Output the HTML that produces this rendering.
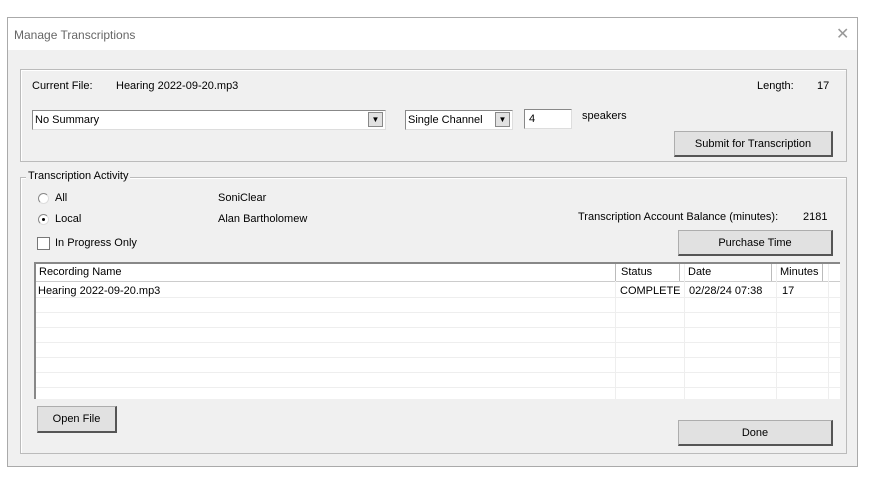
<!DOCTYPE html>
<html><head><style>
body{margin:0;width:870px;height:483px;background:#fff;position:relative;font-family:"Liberation Sans",sans-serif;font-size:11px;color:#000;overflow:hidden}
.a{position:absolute;white-space:nowrap}
.win{left:7px;top:17px;width:851px;height:450px;border:1px solid #aaa;background:#f0f0f0;box-sizing:border-box}
.title{left:8px;top:18px;width:849px;height:32px;background:#fff}
.grp{border:1px solid #bbb;box-shadow:inset 1px 1px 0 #fff}
.btn{background:#e1e1e1;border:1px solid #adadad;border-right:2px solid #555;border-bottom:2px solid #555;box-sizing:border-box;text-align:center}
.inp{background:#fff;border:1px solid #888;border-right-color:#ddd;border-bottom-color:#ddd;box-sizing:border-box}
.dd{width:15px;height:15px;background:#e1e1e1;border:1px solid #888;box-sizing:border-box;font-size:8px;text-align:center;line-height:14px}
.row{left:36px;width:804px;height:1px;background:#eee}
.col{width:1px;background:#eee}
.rad{width:9px;height:9px;border-radius:50%;border:1px solid #888;border-right-color:#ddd;border-bottom-color:#ddd;background:#fff}
</style></head><body>
<div class="a win"></div>
<div class="a title"></div>
<div class="a" style="left:14px;top:28px;font-size:12px;color:#666">Manage Transcriptions</div>
<div class="a" style="left:836px;top:24px;font-size:16px;color:#999">✕</div>

<div class="a grp" style="left:20px;top:69px;width:825px;height:91px"></div>
<div class="a" style="left:32px;top:80px">Current File:</div>
<div class="a" style="left:116px;top:80px">Hearing 2022-09-20.mp3</div>
<div class="a" style="left:757px;top:80px">Length:</div>
<div class="a" style="left:817px;top:80px">17</div>
<div class="a inp" style="left:32px;top:110px;width:354px;height:20px;padding:3px 2px">No Summary</div>
<div class="a dd" style="left:368px;top:112px">▼</div>
<div class="a inp" style="left:405px;top:110px;width:108px;height:20px;padding:3px 2px">Single Channel</div>
<div class="a dd" style="left:495px;top:112px">▼</div>
<div class="a inp" style="left:524px;top:109px;width:48px;height:20px;padding:3px 4px">4</div>
<div class="a" style="left:582px;top:110px">speakers</div>
<div class="a btn" style="left:674px;top:131px;width:159px;height:26px;line-height:24px">Submit for Transcription</div>

<div class="a grp" style="left:20px;top:177px;width:825px;height:275px"></div>
<div class="a" style="left:26px;top:170px;background:#f0f0f0;padding:0 2px">Transcription Activity</div>
<div class="a rad" style="left:38px;top:193px"></div><div class="a" style="left:55px;top:192px">All</div>
<div class="a rad" style="left:38px;top:214px"></div><div class="a" style="left:42px;top:218px;width:3px;height:3px;border-radius:50%;background:#000"></div><div class="a" style="left:55px;top:213px">Local</div>
<div class="a" style="left:37px;top:237px;width:11px;height:11px;border:1px solid #777;background:#fff"></div>
<div class="a" style="left:55px;top:237px">In Progress Only</div>
<div class="a" style="left:218px;top:192px">SoniClear</div>
<div class="a" style="left:218px;top:213px">Alan Bartholomew</div>
<div class="a" style="left:578px;top:211px">Transcription Account Balance (minutes):</div>
<div class="a" style="left:803px;top:211px">2181</div>
<div class="a btn" style="left:678px;top:230px;width:155px;height:26px;line-height:24px">Purchase Time</div>

<div class="a" style="left:34px;top:262px;width:806px;height:137px;background:#fff;border-top:2px solid #888;border-left:2px solid #888;box-sizing:border-box"></div>
<div class="a" style="left:36px;top:264px;width:804px;height:17px;background:#fff;border-bottom:1px solid #ccc"></div>
<div class="a" style="left:39px;top:266px">Recording Name</div>
<div class="a" style="left:621px;top:266px">Status</div>
<div class="a" style="left:688px;top:266px">Date</div>
<div class="a" style="left:780px;top:266px">Minutes</div>
<div class="a col" style="left:615px;top:264px;height:135px"></div>
<div class="a col" style="left:684px;top:264px;height:135px"></div>
<div class="a col" style="left:776px;top:264px;height:135px"></div>
<div class="a col" style="left:828px;top:264px;height:135px"></div>
<div class="a" style="left:615px;top:264px;width:1px;height:17px;background:#bbb"></div>
<div class="a" style="left:679px;top:264px;width:1px;height:17px;background:#bbb"></div>
<div class="a" style="left:771px;top:264px;width:1px;height:17px;background:#bbb"></div>
<div class="a" style="left:822px;top:264px;width:1px;height:17px;background:#bbb"></div>
<div class="a" style="left:38px;top:285px">Hearing 2022-09-20.mp3</div>
<div class="a" style="left:620px;top:285px">COMPLETE</div>
<div class="a" style="left:689px;top:285px">02/28/24 07:38</div>
<div class="a" style="left:782px;top:285px">17</div>
<div class="a row" style="top:297px"></div>
<div class="a row" style="top:312px"></div>
<div class="a row" style="top:327px"></div>
<div class="a row" style="top:342px"></div>
<div class="a row" style="top:357px"></div>
<div class="a row" style="top:372px"></div>
<div class="a row" style="top:387px"></div>

<div class="a btn" style="left:37px;top:406px;width:80px;height:27px;line-height:25px">Open File</div>
<div class="a btn" style="left:678px;top:420px;width:155px;height:26px;line-height:24px">Done</div>
</body></html>
